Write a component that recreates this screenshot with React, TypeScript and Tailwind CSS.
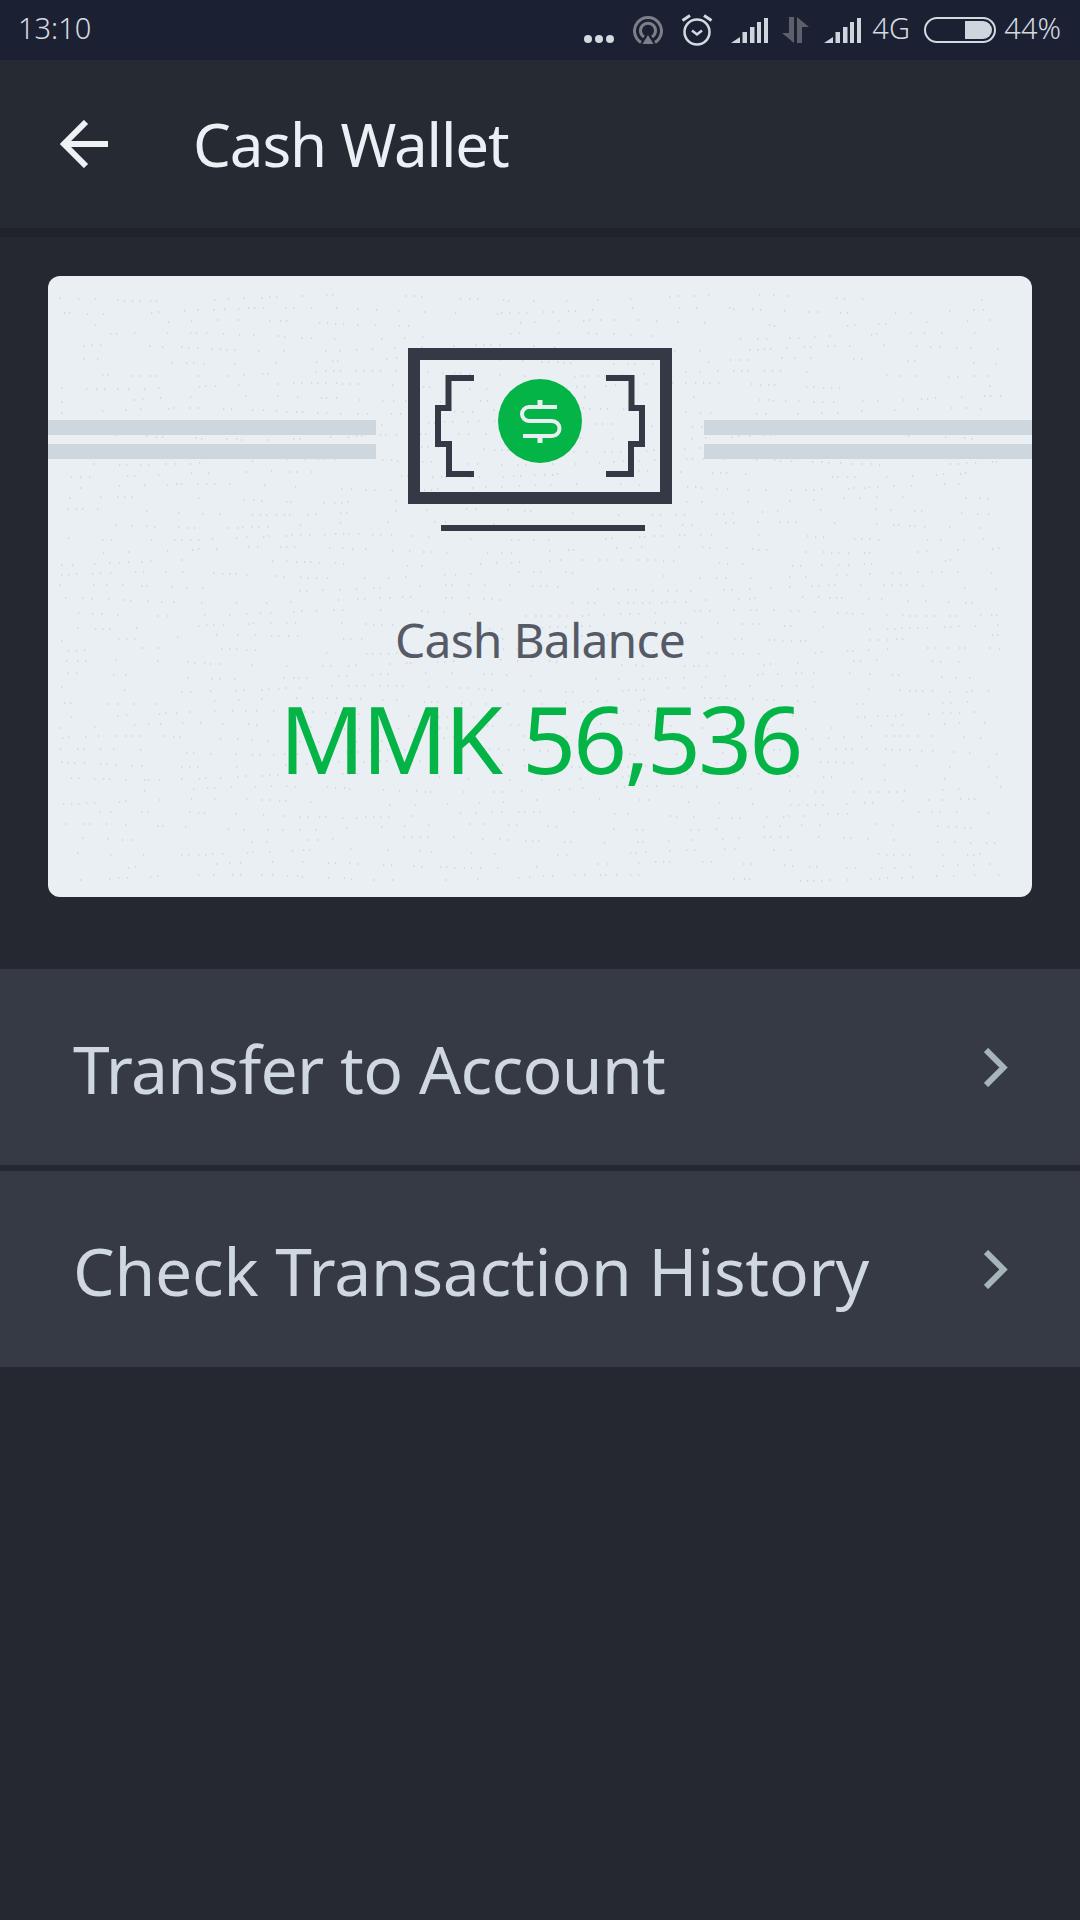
const FONT = "font-['Noto_Sans',sans-serif]";

function hash(a: number, b: number) {
  const s = Math.sin(a * 127.1 + b * 311.7) * 43758.5453;
  return s - Math.floor(s);
}

let dotPath = "";
for (let r = 0; r < 47; r++) {
  for (let c = 0; c < 118; c++) {
    if (hash(r, c) > 0.4) continue;
    const x = 11 + c * 8 + Math.round(hash(c, r) * 4 + 2 * Math.sin(r));
    const y = 22 + r * 12.6 + Math.sin(c * 0.13 + r) * 3;
    dotPath += `M${x} ${Math.round(y)}h1.3`;
  }
}

function Hotspot() {
  return (
    <svg width="30" height="30" viewBox="0 0 30 30" fill="none" stroke="#7b7f88" strokeWidth="3">
      <path d="M8 27.5A13.5 13.5 0 1 1 22 27.5" />
      <path d="M11 22A7.5 7.5 0 1 1 19 22" />
      <path d="M15 20l5.5 9h-11z" fill="#7b7f88" stroke="none" />
    </svg>
  );
}

function Alarm() {
  return (
    <svg width="32" height="33" viewBox="0 0 32 33" fill="none" stroke="#d3dae0" strokeWidth="2.5">
      <circle cx="16" cy="19" r="12.5" />
      <path d="M11 17.5l5 4 5-4" />
      <path d="M1.5 7.5L9 2.5M30.5 7.5L23 2.5" strokeWidth="3" />
    </svg>
  );
}

function Signal() {
  return (
    <svg width="37" height="25" viewBox="0 0 37 25" fill="#cdd5dd">
      <path d="M0 25L9 19V25Z" />
      <rect x="11.5" y="14" width="4.5" height="11" />
      <rect x="19" y="9" width="4.5" height="16" />
      <rect x="26" y="4" width="4" height="21" />
      <rect x="33" y="0" width="4" height="25" />
    </svg>
  );
}

function Arrows() {
  return (
    <svg width="27" height="26" viewBox="0 0 27 26" fill="#5b606b">
      <path d="M7 0h5v26L0 16h7zM15 0l12 10h-7v16h-5z" />
    </svg>
  );
}

function Battery() {
  return (
    <div className="relative h-[26px] w-[72px] rounded-[13px] border-2 border-[#d3dae0]">
      <div className="absolute bottom-[2px] right-[2px] top-[2px] w-[27px] rounded-r-[9px] bg-[#cdd5dd]" />
    </div>
  );
}

function Chevron() {
  return (
    <svg width="24" height="39" viewBox="0 0 24 39" fill="none" stroke="#a7b5b9" strokeWidth="6" className="shrink-0">
      <path d="M2 2L19.5 19.5L2 37" />
    </svg>
  );
}

function MoneyIcon() {
  return (
    <svg width="264" height="184" viewBox="0 0 264 184" fill="none" stroke="#353945" className="relative block">
      <rect x="6" y="6" width="252" height="144" strokeWidth="12" />
      <path d="M33 180H237" strokeWidth="6" />
      <path d="M66 30H40.5V60H30V96H41V126H66" strokeWidth="6" />
      <path d="M198 30H223.5V60H234V96H223V126H198" strokeWidth="6" />
      <circle cx="132" cy="73" r="42" fill="#05b446" stroke="none" />
      <path d="M149 59H121A7 7 0 0 0 121 73H144A7.5 7.5 0 0 1 144 88H115" stroke="#e8eef1" strokeWidth="4" />
      <path d="M132 52V59M132 88V95" stroke="#e8eef1" strokeWidth="5" />
    </svg>
  );
}

function Row({ label, tracking }: { label: string; tracking: string }) {
  return (
    <div className="flex h-[196px] items-center justify-between bg-[#363a45] pl-[73px] pr-[72px]">
      <span className={`mt-[1px] text-[66px] leading-none text-[#cfd7e0] ${tracking}`}>{label}</span>
      <Chevron />
    </div>
  );
}

export default function App() {
  return (
    <div className={`flex h-[1920px] w-[1080px] flex-col overflow-hidden bg-[#252831] ${FONT}`}>
      <div className="flex h-[60px] shrink-0 items-center justify-between bg-[#1c2033] pl-[18px] pr-[19px]">
        <span className="-mt-[6px] text-[29px] font-light leading-none text-[#d3dae0]">13:10</span>
        <div className="flex items-center">
          <div className="mr-[19px] mt-[18px] flex gap-[3px]">
            <span className="h-[8px] w-[8px] rounded-full bg-[#d3dae0]" />
            <span className="h-[8px] w-[8px] rounded-full bg-[#d3dae0]" />
            <span className="h-[8px] w-[8px] rounded-full bg-[#d3dae0]" />
          </div>
          <Hotspot />
          <div className="ml-[18px] -mt-[2px]"><Alarm /></div>
          <div className="ml-[18px] mt-[1px]"><Signal /></div>
          <div className="ml-[14px]"><Arrows /></div>
          <div className="ml-[15px] mt-[1px]"><Signal /></div>
          <span className="-mt-[6px] ml-[11px] w-[38px] text-[29px] font-light leading-none text-[#d3dae0]">4G</span>
          <div className="ml-[14px]"><Battery /></div>
          <span className="-mt-[6px] ml-[8px] text-[29px] font-light leading-none text-[#d3dae0]">44%</span>
        </div>
      </div>

      <div className="flex h-[168px] shrink-0 items-center bg-[#262a32] pl-[60px]">
        <svg width="48" height="48" viewBox="0 0 48 48" fill="none" stroke="#eef2f5" strokeWidth="6">
          <path d="M48 24H4M26 2L4 24L26 46" />
        </svg>
        <span className="ml-[85px] text-[60px] leading-none tracking-[-1.1px] text-[#ebf0f4]">Cash Wallet</span>
      </div>
      <div className="h-[9px] shrink-0 bg-[#20232b]" />

      <div className="relative mx-[48px] mt-[39px] flex h-[621px] shrink-0 flex-col items-center overflow-hidden rounded-[12px] bg-[#e9eff2]">
        <svg width="984" height="621" viewBox="0 0 984 621" className="absolute left-0 top-0">
          <path d={dotPath} stroke="#cdd4d9" strokeWidth="1.3" fill="none" />
        </svg>
        <div className="relative mt-[72px] flex w-full items-start justify-between">
          <div className="mt-[72px] flex w-[328px] flex-col gap-[9px]">
            <div className="h-[15px] bg-[#cdd7dd]" />
            <div className="h-[15px] bg-[#cdd7dd]" />
          </div>
          <MoneyIcon />
          <div className="mt-[72px] flex w-[328px] flex-col gap-[9px]">
            <div className="h-[15px] bg-[#cdd7dd]" />
            <div className="h-[15px] bg-[#cdd7dd]" />
          </div>
        </div>
        <div className="relative mt-[84px] text-[48px] leading-none tracking-[-0.8px] text-[#555a66]">Cash Balance</div>
        <div className="relative mt-[27px] text-[94px] leading-none tracking-[-2.6px] text-[#05b446]">MMK 56,536</div>
      </div>

      <div className="mt-[72px] flex flex-col gap-[6px]">
        <Row label="Transfer to Account" tracking="tracking-[-0.67px]" />
        <Row label="Check Transaction History" tracking="tracking-[-0.25px]" />
      </div>
    </div>
  );
}
